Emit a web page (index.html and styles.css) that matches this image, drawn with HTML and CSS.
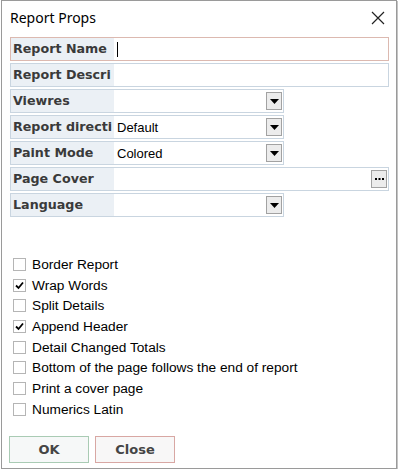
FILE: index.html
```html
<!DOCTYPE html>
<html>
<head>
<meta charset="utf-8">
<link rel="stylesheet" href="styles.css">
</head>
<body>
<div class="window">
  <div class="titlebar">
    <span class="title">Report Props</span>
    <svg class="close" width="14" height="14" viewBox="0 0 14 14"><path d="M1 1L13 13M13 1L1 13" stroke="#222" stroke-width="1.2" fill="none"/></svg>
  </div>
  <div class="props">
    <div class="row full focus"><div class="label">Report Name</div><div class="value"><span class="caret"></span></div></div>
    <div class="row full"><div class="label">Report Descri</div><div class="value"></div></div>
    <div class="row short"><div class="label">Viewres</div><div class="value"></div><div class="btn drop"><svg width="9" height="5" viewBox="0 0 9 5"><path d="M0 0H9L4.5 5Z" fill="#000"/></svg></div></div>
    <div class="row short"><div class="label">Report directi</div><div class="value">Default</div><div class="btn drop"><svg width="9" height="5" viewBox="0 0 9 5"><path d="M0 0H9L4.5 5Z" fill="#000"/></svg></div></div>
    <div class="row short"><div class="label">Paint Mode</div><div class="value">Colored</div><div class="btn drop"><svg width="9" height="5" viewBox="0 0 9 5"><path d="M0 0H9L4.5 5Z" fill="#000"/></svg></div></div>
    <div class="row full"><div class="label">Page Cover</div><div class="value"></div><div class="btn dots"><svg width="9" height="3" viewBox="0 0 9 3"><rect x="0" y="0" width="2" height="2" fill="#000"/><rect x="3.5" y="0" width="2" height="2" fill="#000"/><rect x="7" y="0" width="2" height="2" fill="#000"/></svg></div></div>
    <div class="row short"><div class="label">Language</div><div class="value"></div><div class="btn drop"><svg width="9" height="5" viewBox="0 0 9 5"><path d="M0 0H9L4.5 5Z" fill="#000"/></svg></div></div>
  </div>
  <div class="checks">
    <label class="check"><span class="box"></span>Border Report</label>
    <label class="check"><span class="box on"><svg width="11" height="11" viewBox="0 0 11 11"><path d="M2 5.5L4.5 8L9 2.5" stroke="#000" stroke-width="1.8" fill="none"/></svg></span>Wrap Words</label>
    <label class="check"><span class="box"></span>Split Details</label>
    <label class="check"><span class="box on"><svg width="11" height="11" viewBox="0 0 11 11"><path d="M2 5.5L4.5 8L9 2.5" stroke="#000" stroke-width="1.8" fill="none"/></svg></span>Append Header</label>
    <label class="check"><span class="box"></span>Detail Changed Totals</label>
    <label class="check"><span class="box"></span>Bottom of the page follows the end of report</label>
    <label class="check"><span class="box"></span>Print a cover page</label>
    <label class="check"><span class="box"></span>Numerics Latin</label>
  </div>
  <div class="buttons">
    <button class="b ok">OK</button>
    <button class="b cancel">Close</button>
  </div>
</div>
</body>
</html>
```
FILE: styles.css
```css
html, body {
  margin: 0;
  padding: 0;
  background: #ffffff;
}
.window {
  margin-left: 1px;
  width: 394px;
  height: 467px;
  border: 1px solid #9a9a9a;
  box-shadow: 1px 1px 0 #c4c4c4;
  background: #fff;
  font-family: "Liberation Sans", Arial, sans-serif;
  display: flex;
  flex-direction: column;
}
.titlebar {
  height: 36px;
  display: flex;
  align-items: center;
  justify-content: space-between;
  padding: 0 11px 0 8px;
  box-sizing: border-box;
}
.title {
  font-family: "Noto Sans", "Open Sans", sans-serif;
  font-size: 14px;
  color: #000;
  margin-top: -3px;
}
.close { margin-top: -2px; }
.props {
  display: flex;
  flex-direction: column;
  gap: 2px;
  padding-left: 8px;
}
.row {
  height: 24px;
  box-sizing: border-box;
  border: 1px solid #c9d5e0;
  display: flex;
  align-items: center;
  background: #fff;
}
.row.full { width: 379px; }
.row.short { width: 274px; }
.row.focus { border-color: #dcb9b0; }
.label {
  width: 103px;
  height: 100%;
  flex: none;
  background: #ebf0f5;
  font-family: "DejaVu Sans", Verdana, sans-serif;
  font-weight: bold;
  font-size: 12.7px;
  color: #3a3a3a;
  white-space: nowrap;
  overflow: hidden;
  padding-left: 2px;
  box-sizing: border-box;
  line-height: 22px;
}
.value {
  flex: 1;
  padding-left: 3px;
  font-size: 13px;
  color: #000;
  display: flex;
  align-items: center;
  height: 100%;
}
.caret {
  width: 1px;
  height: 15px;
  background: #000;
}
.btn {
  width: 16px;
  height: 18px;
  box-sizing: border-box;
  border: 1px solid #a2a2a2;
  background: #ececec;
  display: flex;
  align-items: center;
  justify-content: center;
  margin-right: 1px;
  flex: none;
}
.checks {
  margin-top: 37px;
  display: flex;
  flex-direction: column;
  padding-left: 11px;
}
.check {
  height: 20.7px;
  display: flex;
  align-items: center;
  font-size: 13.7px;
  color: #000;
}
.box {
  width: 13px;
  height: 13px;
  box-sizing: border-box;
  border: 1px solid #b5b5b5;
  background: #fff;
  margin-right: 6px;
  display: flex;
  align-items: center;
  justify-content: center;
}
.buttons {
  margin-top: 16px;
  display: flex;
  gap: 6px;
  padding-left: 7px;
}
.b {
  width: 80px;
  height: 27px;
  font-family: "DejaVu Sans", Verdana, sans-serif;
  font-weight: bold;
  font-size: 13px;
  color: #454545;
  background: #f6f8f8;
  border: 1px solid #a9cbb4;
  padding: 0;
}
.b.cancel { border-color: #d8a7a3; background: #f8f7f7; }
```
